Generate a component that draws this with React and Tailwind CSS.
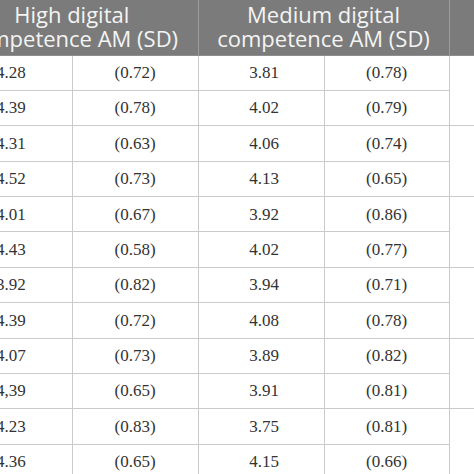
import React from 'react'

const rows = [
  ['4.28', '(0.72)', '3.81', '(0.78)'],
  ['4.39', '(0.78)', '4.02', '(0.79)'],
  ['4.31', '(0.63)', '4.06', '(0.74)'],
  ['4.52', '(0.73)', '4.13', '(0.65)'],
  ['4.01', '(0.67)', '3.92', '(0.86)'],
  ['4.43', '(0.58)', '4.02', '(0.77)'],
  ['3.92', '(0.82)', '3.94', '(0.71)'],
  ['4.39', '(0.72)', '4.08', '(0.78)'],
  ['4.07', '(0.73)', '3.89', '(0.82)'],
  ['4,39', '(0.65)', '3.91', '(0.81)'],
  ['4.23', '(0.83)', '3.75', '(0.81)'],
  ['4.36', '(0.65)', '4.15', '(0.66)'],
]

export default function App() {
  return (
    <div className="w-[474px] h-[474px] overflow-hidden bg-white">
      <table className="ml-[-54px] table-fixed border-collapse w-[629px]">
        <colgroup>
          <col className="w-[126px]" />
          <col className="w-[126px]" />
          <col className="w-[126px]" />
          <col className="w-[125px]" />
          <col className="w-[126px]" />
        </colgroup>
        <thead>
          <tr className="h-[55px] bg-[#7b7b7b] text-[#f4f4f4] font-['Open_Sans',sans-serif] text-[22px] leading-[24px]">
            <th colSpan={2} className="font-normal text-center border-r border-[#9c9c9c] border-b border-b-[#8e8e8e] pb-[2px]">
              High digital<br />competence AM (SD)
            </th>
            <th colSpan={2} className="font-normal text-center border-r border-[#9c9c9c] border-b border-b-[#8e8e8e] pb-[2px]">
              Medium digital<br />competence AM (SD)
            </th>
            <th className="border-b border-b-[#8e8e8e]"></th>
          </tr>
        </thead>
        <tbody className="font-['Liberation_Serif',serif] text-[17px] text-[#333]">
          {rows.map((r, i) => (
            <tr key={i} className="h-[35.4px]">
              <td className="text-center border-b border-r border-[#cacaca] pl-[4px]">{r[0]}</td>
              <td className="text-center border-b border-r border-[#cacaca]">{r[1]}</td>
              <td className="text-center border-b border-r border-[#cacaca] pl-[6px]">{r[2]}</td>
              <td className="text-center border-b border-r border-[#cacaca]">{r[3]}</td>
              {i % 2 === 0 && <td rowSpan={2} className="border-b border-[#cacaca]"></td>}
            </tr>
          ))}
        </tbody>
      </table>
    </div>
  )
}
